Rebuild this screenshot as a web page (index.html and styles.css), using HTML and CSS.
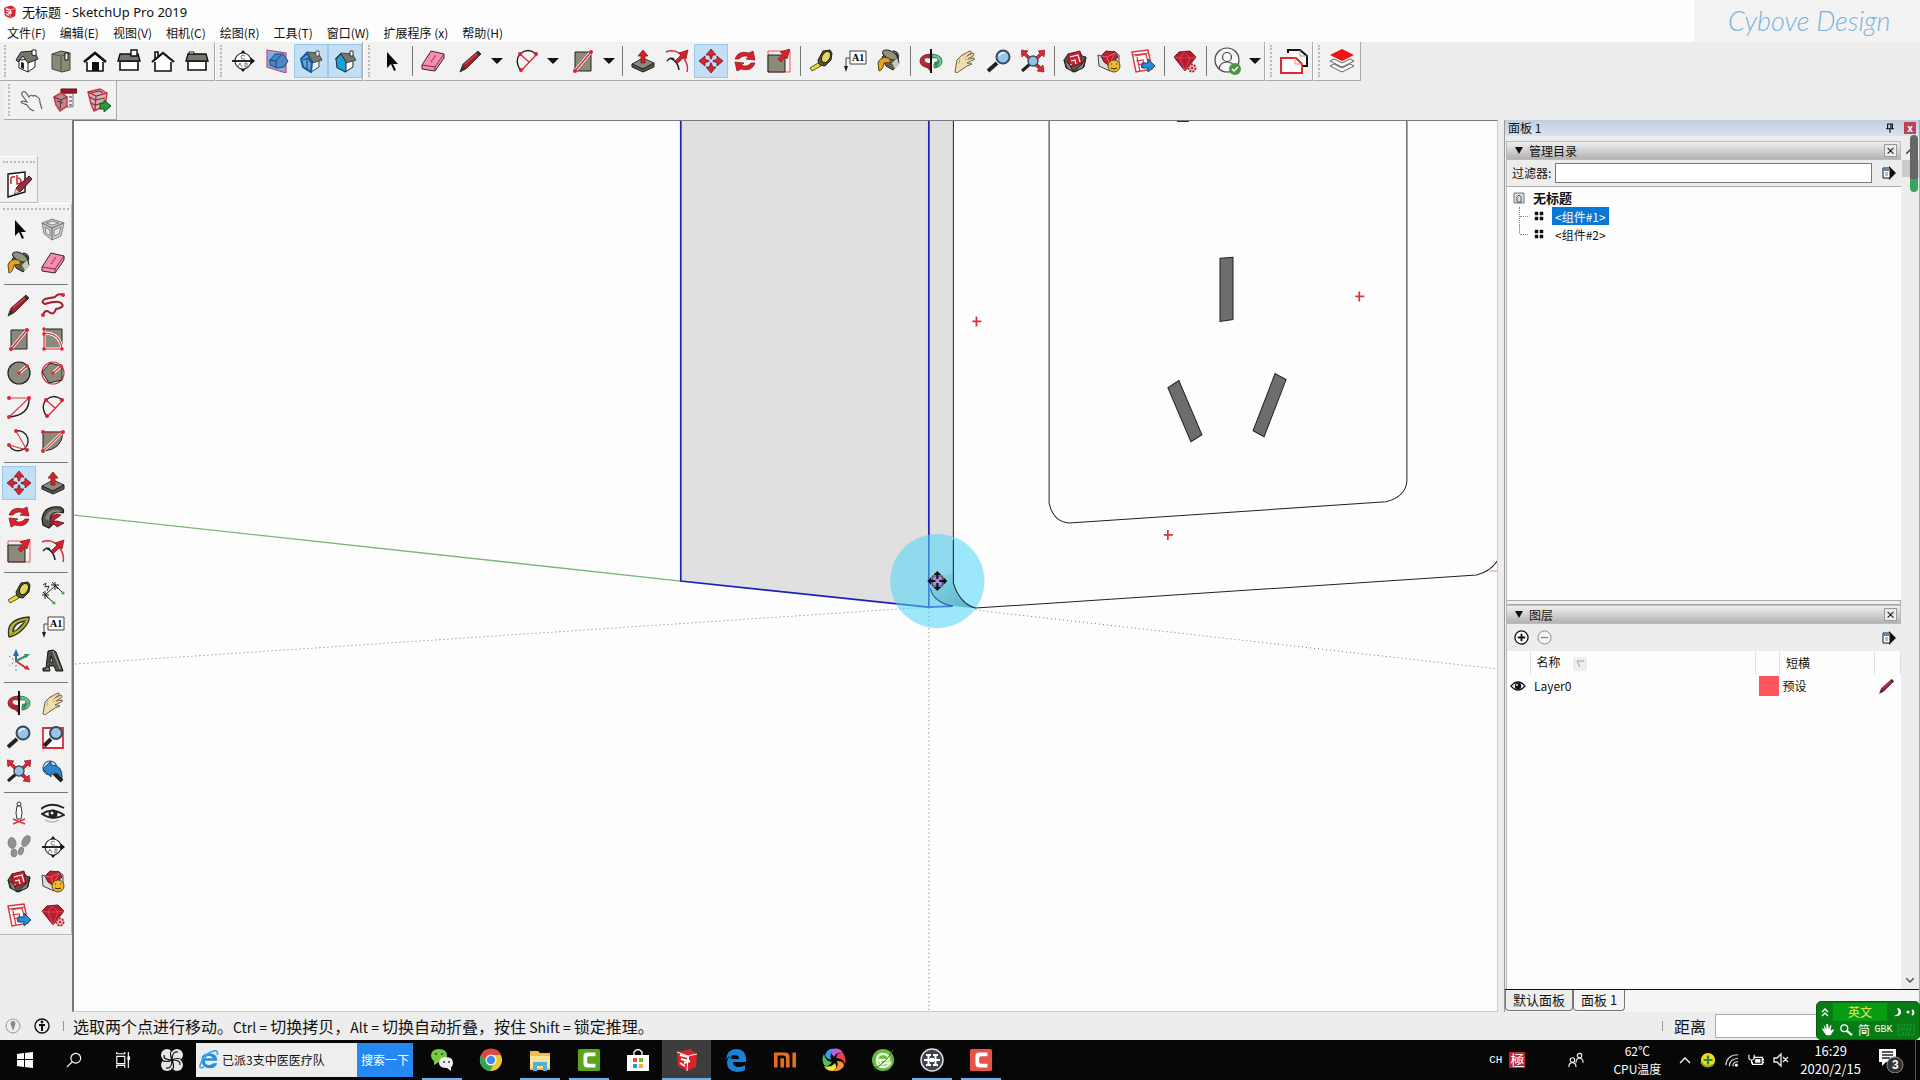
FILE: index.html
```html
<!DOCTYPE html>
<html lang="zh-CN">
<head>
<meta charset="utf-8">
<title>无标题 - SketchUp Pro 2019</title>
<link rel="stylesheet" href="styles.css">
</head>
<body>
<svg class="sprite" aria-hidden="true">
  <symbol id="i-logo" viewBox="0 0 24 24"><path d="M2 4 15 1l7 5-1 13-9 4-9-5z" fill="#d8232c"/><path d="m2 4 11 4 9-2M13 8l-1 15" fill="none" stroke="#fff" stroke-width="1"/><path d="m5 7 8 2v4l-7-2M9 15l6-2M5 15l5 3" fill="none" stroke="#fff" stroke-width="2"/></symbol>
  <symbol id="i-iso" viewBox="0 0 24 24"><path d="M4 11v8l9 4 7-5v-8z" fill="#fff" stroke="#222"/><path d="M1 11 6 3l13-1 4 8-10 4-5-7-5 6z" fill="#77776c" stroke="#222"/><path d="M6 13v6l3 1v-6z" fill="#222"/><path d="M13 14v9" stroke="#222"/><path d="M17 1h4v6l-4-1z" fill="#fff" stroke="#222"/></symbol>
  <symbol id="i-top" viewBox="0 0 24 24"><path d="m3 5 9-3 9 2v17l-8 2-10-3z" fill="#8b8a75" stroke="#444"/><path d="M12 6v17M3 5l9 2 9-3" fill="none" stroke="#55554a"/><path d="M16 4h3v7h-3z" fill="#fff" stroke="#111"/></symbol>
  <symbol id="i-front" viewBox="0 0 24 24"><path d="M4 12v10h16V12" fill="#fff" stroke="#111" stroke-width="1.6"/><path d="m1 13 11-9 11 9" fill="#fff" stroke="#111" stroke-width="2.6"/><path d="M9 13h7v9H9z" fill="#111"/></symbol>
  <symbol id="i-right" viewBox="0 0 24 24"><path d="M3 12h18v9H3z" fill="#fff" stroke="#111" stroke-width="1.6"/><path d="m3 5-2 7h22l-2-7z" fill="#77776c" stroke="#111" stroke-width="1.4"/><path d="M14 1h6v6h-6z" fill="#fff" stroke="#111" stroke-width="1.4"/></symbol>
  <symbol id="i-back" viewBox="0 0 24 24"><path d="M4 3h3v8H4zM4 12v10h16V12" fill="#fff" stroke="#111" stroke-width="1.6"/><path d="m1 13 11-9 11 9" fill="#fff" stroke="#111" stroke-width="2.2"/></symbol>
  <symbol id="i-left" viewBox="0 0 24 24"><path d="M3 12h18v9H3z" fill="#fff" stroke="#111" stroke-width="1.6"/><path d="m3 5-2 7h22l-2-7z" fill="#77776c" stroke="#111" stroke-width="1.4"/><path d="M4 3h5v2H4z" fill="#fff" stroke="#111"/></symbol>
  <symbol id="i-section" viewBox="0 0 24 24"><path d="m12 1 4 5H8zM12 23l4-5H8zM18 7l6 5-6 5z" fill="#111"/><circle cx="12" cy="12" r="8" fill="#fff" stroke="#333" stroke-width="1.2"/><path d="M1 12h22" stroke="#111" stroke-width="1.8"/><path d="M14 7q-4-2-4 1t4 2M7 18l2-4 2 4m3-4v4h2v-4h-2" fill="none" stroke="#777"/></symbol>
  <symbol id="i-plane" viewBox="0 0 24 24"><path d="m2 1 19 3v20L2 18z" fill="#82aee0" stroke="#c0487a" stroke-width="1.2"/><path d="m5 11 5-6h8l5 7-4 6-7 1-7-3z" fill="#4d85bd" stroke="#174b82"/><path d="M11 12v7M4 11l7 1 5-6" fill="none" stroke="#174b82"/></symbol>
  <symbol id="i-cut" viewBox="0 0 24 24"><path d="M4 10v8l8 5 8-5v-7z" fill="#eee" stroke="#345"/><path d="m2 10 6-7 11 1 4 7-10 3-4-7z" fill="#77776c" stroke="#444"/><path d="m2 10 6-6 5 9-1 10-8-5z" fill="#5fa5d8" stroke="#145aa0" stroke-width="2"/><path d="M4 11 9 9l3 5M8 10v10" fill="none" stroke="#124" stroke-width=".8"/><path d="M17 2h3v5h-3z" fill="#fff" stroke="#456"/></symbol>
  <symbol id="i-fill" viewBox="0 0 24 24"><path d="M4 10v8l8 5 8-5v-7z" fill="#fff" stroke="#222"/><path d="m2 10 6-6 11 1 4 6-10 3-4-7z" fill="#77776c" stroke="#444"/><path d="m3 10 5-5 5 8v10l-9-4z" fill="#169fd8" stroke="#234"/><path d="M17 2h3v5h-3z" fill="#fff" stroke="#333"/></symbol>
  <symbol id="i-cursor" viewBox="0 0 24 24"><path d="M8 3v16l4-4 3 7 2-1-3-6h5z" fill="#080808"/></symbol>
  <symbol id="i-eraser" viewBox="0 0 24 24"><path d="m1 16 9-14 13 3v4l-9 13-13-2z" fill="#f48fb0" stroke="#42212f"/><path d="m1 16 13 2 9-13M14 18v4" fill="none" stroke="#713349"/><path d="m10 13 5-7" stroke="#a93b61" stroke-width="1.6" stroke-dasharray="2 1"/></symbol>
  <symbol id="i-pencil" viewBox="0 0 24 24"><path d="m1 23 3-8L19 2l3 3L8 19z" fill="#a91c2a" stroke="#352226" stroke-width=".8"/><path d="m3 17 4 3-6 3zM17 4l2-2 3 3-2 2z" fill="#333"/><path d="M6 15 18 5" stroke="#e25a62"/></symbol>
  <symbol id="i-arc" viewBox="0 0 24 24"><path d="M6 22Q-1 12 5 5q8-7 16 0" fill="none" stroke="#222" stroke-width="1.4"/><path d="M6 22 22 5M5 5l9 8" stroke="#d82232" stroke-width="1.2"/><g fill="#d82232"><circle cx="6" cy="21" r="2"/><circle cx="21" cy="5" r="2"/><circle cx="5" cy="5" r="2"/></g></symbol>
  <symbol id="i-rect" viewBox="0 0 24 24"><path d="M4 3h16v19H4z" fill="#8b8979" stroke="#222"/><path d="M4 22 20 3" stroke="#fff" stroke-width="3"/><path d="M4 22 20 3" stroke="#d82232" stroke-width="1.4"/><circle cx="4" cy="22" r="2" fill="#d82232"/><circle cx="20" cy="3" r="2" fill="#d82232"/></symbol>
  <symbol id="i-push" viewBox="0 0 24 24"><path d="m1 15 11-6 11 5-11 6z" fill="#8c8a79" stroke="#333"/><path d="M1 15v3l11 5 11-5v-4l-11 6z" fill="#55554a" stroke="#222"/><path d="M10 14V7H7l5-6 5 6h-3v7z" fill="#da2028" stroke="#69171b" stroke-width=".7"/></symbol>
  <symbol id="i-offset" viewBox="0 0 24 24"><path d="M1 3q10-4 17 5 6 8 4 15" fill="none" stroke="#df2632" stroke-width="1.4"/><path d="M2 12q3-4 7-2M5 9q8 3 9 12" fill="none" stroke="#222" stroke-width="1.5"/><path d="m10 12 6-6-2-2 9-3-2 9-2-2-6 6z" fill="#d8202a" stroke="#701a1e" stroke-width=".7"/></symbol>
  <symbol id="i-move" viewBox="0 0 24 24"><path d="m12 0 5 6h-3.500l-1 4h-1l-1-4H7zM24 12l-6 5v-3.500l-4-1v-1l4-1V7zM12 24l-5-6h3.500l1-4h1l1 4H17zM0 12l6-5v3.500l4 1v1l-4 1V17z" fill="#dc2530" stroke="#701a20" stroke-width=".8"/></symbol>
  <symbol id="i-rotate" viewBox="0 0 24 24"><path d="M2 10Q5 1 16 4l4-2 2 9-9-1 3-2q-6-3-10 2zM22 14q-3 9-14 6l-4 2-2-9 9 1-3 2q6 3 10-2z" fill="#dd202b" stroke="#74191e" stroke-width=".7"/></symbol>
  <symbol id="i-scale" viewBox="0 0 24 24"><path d="M1 2h22v21H1z" fill="#f8eeee" stroke="#e15962"/><path d="M1 6h17v17H1z" fill="#8b8a79" stroke="#222"/><path d="m11 10 5-5-3-2 10-3-3 10-2-2-4 5z" fill="#e01f28" stroke="#721a1e" stroke-width=".7"/></symbol>
  <symbol id="i-tape" viewBox="0 0 24 24"><path d="m9 11 5-9 7-1 2 3-1 7-6 6-6-1z" fill="#50503c" stroke="#222"/><ellipse cx="17" cy="8" rx="4" ry="6" transform="rotate(30 17 8)" fill="#e5df25" stroke="#222"/><ellipse cx="17" cy="8" rx="1.500" ry="3" transform="rotate(30 17 8)" fill="#cfd0bb"/><path d="m9 14 3 3-9 5-2-3z" fill="#e5dd22" stroke="#333" stroke-width=".8"/></symbol>
  <symbol id="i-text" viewBox="0 0 24 24"><path d="M7 2h16v13H7z" fill="#fff" stroke="#444"/><path d="M7 9H3v9" fill="none" stroke="#444"/><path d="M1 17h4l-2 6z" fill="#222"/><text x="9" y="12" font-size="10" class="glyph-serif">A1</text></symbol>
  <symbol id="i-paint" viewBox="0 0 24 24"><path d="m5 8 6-6 9 3 2 9-6 7-7-4z" fill="#5f6152" stroke="#222"/><ellipse cx="13" cy="6" rx="8" ry="4" transform="rotate(25 13 6)" fill="#8f957c" stroke="#222"/><path d="M15 14q4-4 5-5l2 6-4 5z" fill="#c8cdb2"/><path d="M16 2q7 1 5 8" fill="none" stroke="#333" stroke-width="1.4"/><path d="M12 9Q3 7 1 14l1 8q4-1 5-8l7-1z" fill="#e6a420" stroke="#5a4213"/></symbol>
  <symbol id="i-orbit" viewBox="0 0 24 24"><path d="M11 5Q1 6 1 12t10 7v-4q-6-1-6-4t6-2z" fill="#c52736" stroke="#58202a" stroke-width=".8"/><path d="M13 5q10 1 10 7t-8 7v-4q4-1 4-4t-6-2z" fill="#6fbf93" stroke="#265d46" stroke-width=".8"/><path d="M12 0v24" stroke="#111" stroke-width="2"/><path d="m4 15 7-1v8z" fill="#b61d2a"/><path d="m15 13 6-1-4 7z" fill="#328b5c"/></symbol>
  <symbol id="i-hand" viewBox="0 0 24 24"><path d="m2 23 2-12 5-5 8-4q2 0 1 2l-4 3 6-3q2 1 0 3l-5 3 6-1q1 2-1 2l-6 3q4 0 5 1l-5 2-6 4-4 3z" fill="#f1deb0" stroke="#5d5138" stroke-width=".9"/><path d="m7 9-1 6M9 7l6-4m-4 6 7-4m-6 6 6-2" stroke="#ac976b" stroke-width=".7"/></symbol>
  <symbol id="i-zoom" viewBox="0 0 24 24"><path d="m1 22 9-8" stroke="#20242a" stroke-width="4"/><circle cx="16" cy="8" r="6.500" fill="#9bc3e3" stroke="#34495b" stroke-width="2"/><path d="M12 7q2-4 6-3" fill="none" stroke="#e8f5ff" stroke-width="1.5"/></symbol>
  <symbol id="i-extent" viewBox="0 0 24 24"><path d="m0 1 7 1-2 2 4 4-2 2-4-4-2 2zM24 1l-7 1 2 2-4 4 2 2 4-4 2 2zM23 23l-7-1 2-2-4-3 2-3 4 4 2-2z" fill="#dc2631" stroke="#8c2027" stroke-width=".7"/><path d="m1 22 8-7" stroke="#222" stroke-width="3"/><circle cx="12" cy="12" r="5" fill="#97c2df" stroke="#345066" stroke-width="1.4"/></symbol>
  <symbol id="i-house3d" viewBox="0 0 24 24"><path d="m5 5 12-2 2 4 4 1-2 10-9 5-9-4-2-8z" fill="#5e5148" stroke="#262220"/><path d="m5 5 12-3 2 12-13 4z" fill="#c92033" stroke="#7c1825"/><path d="m7 8 8-2 2 7M8 12l4-1 1 4M8 16v-1" fill="none" stroke="#fff" stroke-width="1.2"/><path d="m1 11 6 5 3 7-6-4zM23 9l-4 6-9 8 10-4z" fill="#8a8175" stroke="#292522"/></symbol>
  <symbol id="i-share" viewBox="0 0 24 24"><path d="m1 6 6 2 10-6 5 4v9l-9 7-11-5z" fill="#ddd" stroke="#444"/><path d="M4 7 9 2l9 1 3 5-8 9-6-4z" fill="#bd1f31" stroke="#621d24"/><path d="m4 7 6 1 8-4-4 8M10 8l3 9" fill="none" stroke="#eb7481" stroke-width=".8"/><circle cx="17" cy="17" r="6" fill="#f1b923" stroke="#5e491b"/><path d="M14 15h1m4 0h1m-6 4q3 2 6 0" stroke="#222" fill="none"/></symbol>
  <symbol id="i-send" viewBox="0 0 24 24"><path d="m1 3 16-2 4 19-16 3z" fill="#fff" stroke="#dd3440" stroke-width="1.4"/><path d="m4 7 11-2 3 12M5 12l7-1 2 7M7 16l3-1 1 4M6 8l3 14M2 6l16-2" fill="none" stroke="#dc3541" stroke-width="1.2"/><path d="M11 14h6v-4l7 7-7 6v-4h-6z" fill="#258bdc" stroke="#17476f"/></symbol>
  <symbol id="i-ruby" viewBox="0 0 24 24"><path d="m1 8 5-5 11-1 6 6-11 14z" fill="#b71c2e" stroke="#701724"/><path d="m1 8 6 1 4-6 6 6 6-1M7 9h10l-5 13z" fill="none" stroke="#ee6270" stroke-width=".6"/><circle cx="19" cy="19" r="3.500" fill="#f4c9cc" stroke="#a52a36" stroke-width="2" stroke-dasharray="2 1"/><circle cx="19" cy="19" r="1.300" fill="#a52a36"/></symbol>
  <symbol id="i-user" viewBox="0 0 28 28"><circle cx="13" cy="13" r="12" fill="#f7f7f7" stroke="#444" stroke-width="1.2"/><circle cx="13" cy="10" r="4.500" fill="none" stroke="#444" stroke-width="1.2"/><path d="M5 22q1-7 8-7t8 7" fill="none" stroke="#444" stroke-width="1.2"/><circle cx="21" cy="22" r="6" fill="#4c9642"/><path d="m18 22 2 2 4-4" fill="none" stroke="#fff" stroke-width="1.4"/></symbol>
  <symbol id="i-docs" viewBox="0 0 28 28"><path d="M8 6V3h12l7 6v10h-4" fill="#fff" stroke="#111" stroke-width="2"/><path d="M20 3v6h7" fill="none" stroke="#999"/><path d="M1 11h15l6 6v9H1z" fill="#fff" stroke="#e12630" stroke-width="2"/><path d="M15 11v6h7" fill="none" stroke="#e88"/></symbol>
  <symbol id="i-layers" viewBox="0 0 28 28"><path d="m2 19 12 6 12-6-4-2-8 4-8-4z" fill="#fff" stroke="#666"/><path d="m2 14 12 6 12-6-4-2-8 4-8-4z" fill="#fff" stroke="#666"/><path d="m14 2 12 6-12 6L2 8z" fill="#f31212"/></symbol>
  <symbol id="i-point" viewBox="0 0 24 24"><path d="M4 4q2-2 6 5 2-3 4-1 3-1 4 1 3 0 3 6l2 6M4 4q-2 1-1 3l5 7-5-1q-2 1 0 2l5 2 3 4 4 2" fill="none" stroke="#555" stroke-width="1.1"/></symbol>
  <symbol id="i-attr" viewBox="0 0 24 24"><path d="M11 5h9v14h-9z" fill="#eee" stroke="#777"/><path d="M8 1h16v4H8z" fill="#a91626" stroke="#53151b"/><path d="m1 9 7-4 6 4v9l-7 5-4-6z" fill="#b78b8b" stroke="#c83950" stroke-width="1.5"/><path d="m1 9 7 3 6-3m-6 3-1 9M4 13l6 2" fill="none" stroke="#622833"/><path d="M16 9h3m-3 4h3m-3 4h3" stroke="#333"/></symbol>
  <symbol id="i-option" viewBox="0 0 24 24"><path d="m1 4 12-3 7 4-2 13-11 5-3-7z" fill="#cbbab3" stroke="#cb314a" stroke-width="1.4"/><path d="m1 4 8 4 11-3M9 8 8 22M3 9l5 3 10-2M4 15l4 2 8-2M4 5l8-2 4 2" fill="none" stroke="#a8223b" stroke-width="1.2"/><path d="M13 15h4v-3l7 6-7 6v-3h-4z" fill="#299c3a" stroke="#174d22"/></symbol>
  <symbol id="i-rb" viewBox="0 0 28 28"><path d="m3 4 17-2v20L3 27z" fill="#fff" stroke="#111" stroke-width="1.4"/><path d="M6 14V8q2-2 4-1M12 5v9q4 0 4-3t-4-3" fill="none" stroke="#d52b36" stroke-width="1.6"/><path d="m9 24 3-7L24 6l3 3-11 12z" fill="#a42d3b" stroke="#222"/><path d="m9 24 2-5 3 3z" fill="#e9ca9c"/></symbol>
  <symbol id="i-component" viewBox="0 0 24 24"><path d="m1 6 10-4 12 4-3 13-9 4-8-6z" fill="#c9c9c9" stroke="#888"/><path d="m1 6 10 5 12-5M11 11v12" fill="none" stroke="#777" stroke-width="1.2"/><path d="m5 6 7-2 6 2-7 2zM4 10l5 3v6l-4-3zM13 13l7-3-2 7-5 2z" fill="#e7e7e7" stroke="#888"/></symbol>
  <symbol id="i-free" viewBox="0 0 24 24"><path d="M22 2q-5-2-8 2L4 6q-5 3 0 5 13-4 16-1 5 4-5 6-2 7-7 3-4-3-6 3" fill="none" stroke="#9d1f2e" stroke-width="2"/><circle cx="22" cy="2" r="2" fill="#da2736"/><circle cx="2" cy="22" r="2" fill="#da2736"/></symbol>
  <symbol id="i-rotrect" viewBox="0 0 24 24"><path d="M3 2h18v20H3z" fill="#8b8979" stroke="#222"/><path d="M3 2v20h18M3 6q16 0 18 16" fill="none" stroke="#fff" stroke-width="3"/><path d="M3 2v20h18M3 6q16 0 18 16" fill="none" stroke="#d82333" stroke-width="1.2"/><g fill="#d82333"><circle cx="3" cy="2" r="1.800"/><circle cx="3" cy="7" r="1.800"/><circle cx="3" cy="22" r="1.800"/><circle cx="21" cy="22" r="1.800"/></g></symbol>
  <symbol id="i-circle" viewBox="0 0 24 24"><circle cx="12" cy="12" r="11" fill="#8b8a79" stroke="#222" stroke-width="1.2"/><path d="m12 12 8-7" stroke="#fff" stroke-width="3"/><path d="m12 12 8-7" stroke="#db2737" stroke-width="1.3"/><circle cx="12" cy="12" r="1.800" fill="#db2737"/><circle cx="20" cy="5" r="1.800" fill="#db2737"/></symbol>
  <symbol id="i-polygon" viewBox="0 0 24 24"><circle cx="12" cy="12" r="11" fill="none" stroke="#dc3140" stroke-width="1.2"/><path d="m1 11 8-9 12 3v14l-13 3z" fill="#8b8a79" stroke="#222"/><path d="m12 12 8-7" stroke="#fff" stroke-width="3"/><path d="m12 12 8-7" stroke="#db2737" stroke-width="1.3"/><circle cx="12" cy="12" r="1.800" fill="#db2737"/><circle cx="20" cy="5" r="1.800" fill="#db2737"/></symbol>
  <symbol id="i-arc2" viewBox="0 0 24 24"><path d="M22 3q1 17-20 19" fill="none" stroke="#222" stroke-width="1.4"/><path d="M2 3h20L2 22" fill="none" stroke="#dd3541" stroke-width="1.1"/><g fill="#db2737"><circle cx="2" cy="3" r="2"/><circle cx="22" cy="3" r="2"/><circle cx="2" cy="22" r="2"/></g></symbol>
  <symbol id="i-arc3" viewBox="0 0 24 24"><path d="M9 2a10 10 0 1 1-7 14" fill="none" stroke="#222" stroke-width="1.4"/><path d="m9 2 11 19L2 16" fill="none" stroke="#dd3541" stroke-width="1.1"/><g fill="#db2737"><circle cx="9" cy="2" r="2"/><circle cx="20" cy="21" r="2"/><circle cx="2" cy="16" r="2"/></g></symbol>
  <symbol id="i-pie" viewBox="0 0 24 24"><path d="M2 3h20q-1 18-20 19z" fill="#8b8a79" stroke="#222"/><path d="M2 22 22 3" fill="none" stroke="#fff" stroke-width="3"/><path d="M2 3h20L2 22" fill="none" stroke="#dd3541" stroke-width="1.1"/><g fill="#db2737"><circle cx="2" cy="3" r="2"/><circle cx="22" cy="3" r="2"/><circle cx="2" cy="22" r="2"/></g></symbol>
  <symbol id="i-follow" viewBox="0 0 24 24"><path d="M1 14Q3 0 19 2q5 2 3 6-9-3-12 3l2 8-4 4-6-3z" fill="#56544c" stroke="#161616" stroke-width="1.2"/><path d="M4 13Q8 3 18 5l2 2Q8 5 8 16z" fill="#8c887b"/><path d="M10 12q4-5 10-2l-7 5 1 4-5 1z" fill="#b32533" stroke="#5b151d" stroke-width=".8"/><path d="m11 17 5-1 7 2-7 4z" fill="#c9232f" stroke="#461218" stroke-width=".8"/></symbol>
  <symbol id="i-dimension" viewBox="0 0 24 24"><path d="m4 14 10-9M4 14l9 8M14 4l8 8M1 14h7M4 10v8M10 4h8M14 1v8M2 11l5 6M11 1l6 7" stroke="#222" stroke-width="1"/><path d="m2 4 3-2-1 4 4-1-2 5" fill="none" stroke="#333"/><circle cx="13" cy="22" r="1.600" fill="#46a951"/><circle cx="22" cy="12" r="1.600" fill="#46a951"/></symbol>
  <symbol id="i-protractor" viewBox="0 0 24 24"><path fill-rule="evenodd" d="M2 22Q-2 4 22 2q1 5-6 12T2 22m4-5q8-4 12-11Q6 8 6 17" fill="#b3b240" stroke="#32321a" stroke-width="1.3"/><path d="M4 20 20 4" stroke="#77751f" stroke-width="1"/></symbol>
  <symbol id="i-axes" viewBox="0 0 24 24"><path d="M9 12V5" stroke="#276dac" stroke-width="2"/><path d="m9 12 10-5" stroke="#369454" stroke-width="2"/><path d="m9 12 10 7" stroke="#cf2c35" stroke-width="2"/><path d="M9 0 6 7h6z" fill="#276dac"/><path d="m23 5-6 0 2 4z" fill="#369454"/><path d="m23 21-6-1 3-4z" fill="#cf2c35"/><path d="m2 7 7 5-7 5M9 12v10" fill="none" stroke="#6a8ba4" stroke-dasharray="2 2"/></symbol>
  <symbol id="i-3d" viewBox="0 0 24 24"><path fill-rule="evenodd" d="M2 19h3L7 2l5-1 3 2 6 16 1 3h-7l-2-5H8l1 5H2zm7-6h3l-2-6z" fill="#4f504a" stroke="#161616"/><path d="m12 2 7 18M5 20h3" stroke="#aaa"/></symbol>
  <symbol id="i-zoomwin" viewBox="0 0 24 24"><path d="M2 3h20v20H2z" fill="#fff" stroke="#df2d38" stroke-width="1.8"/><path d="m3 21 7-7" stroke="#20242a" stroke-width="4"/><circle cx="15" cy="8" r="6" fill="#9bc3e3" stroke="#34495b" stroke-width="2"/></symbol>
  <symbol id="i-prev" viewBox="0 0 24 24"><path d="m13 14 8 8" stroke="#222" stroke-width="4"/><circle cx="9" cy="9" r="7" fill="#d3e6f4" stroke="#456" stroke-width="1.2"/><path d="m2 10 8-8v4q12 0 11 13-3-6-11-5v4z" fill="#2f87cf" stroke="#174a73"/></symbol>
  <symbol id="i-position" viewBox="0 0 24 24"><circle cx="12" cy="3" r="2" fill="#fff" stroke="#333"/><path d="M10 5h4l1 7-1 6h-4l-1-6z" fill="#fff" stroke="#333"/><path d="m6 23 12-5M6 18l12 5" stroke="#df3440" stroke-width="1.4"/></symbol>
  <symbol id="i-look" viewBox="0 0 24 24"><path d="M0 8q10-8 23-1" fill="none" stroke="#222" stroke-width="1.8"/><path d="M1 13q10-7 22 1-11 6-22-1z" fill="#fff" stroke="#222" stroke-width="1.8"/><circle cx="12" cy="13" r="4.500" fill="#222"/><circle cx="11" cy="12" r="1.500" fill="#eee"/><path d="M4 19q7 4 14 0" fill="none" stroke="#bbb" stroke-width="1.5"/></symbol>
  <symbol id="i-walk" viewBox="0 0 24 24"><g fill="#929292" stroke="#777" stroke-width=".7"><ellipse cx="5" cy="8" rx="4" ry="5.500" transform="rotate(-8 5 8)"/><ellipse cx="7" cy="18" rx="3" ry="4"/><ellipse cx="19" cy="6" rx="3.500" ry="6" transform="rotate(30 19 6)"/><ellipse cx="14" cy="16" rx="2.500" ry="4" transform="rotate(20 14 16)"/></g></symbol>
  <symbol id="i-menuarrow" viewBox="0 0 16 16"><path d="m8 1 7 7-7 7z" fill="#111"/><path d="M2 3h7v10H2z" fill="#fff" stroke="#111"/><path d="M3 4h5v2H3z" fill="#3f89ce"/><path d="M4 8h3m-3 2h3" stroke="#777"/></symbol>
  <symbol id="i-grid" viewBox="0 0 10 10"><path d="M1 1h3v3H1zM6 1h3v3H6zM1 6h3v3H1zM6 6h3v3H6z" fill="#111" stroke="#111" stroke-width=".5"/></symbol>
  <symbol id="i-eye" viewBox="0 0 16 12"><path d="M1 6q7-8 14 0-7 8-14 0z" fill="#fff" stroke="#111" stroke-width="1.3"/><circle cx="8" cy="6" r="3.200" fill="#111"/><circle cx="7" cy="5" r="1" fill="#fff"/></symbol>
  <symbol id="t-win" viewBox="0 0 16 16"><path d="m0 2 7-1v6H0zM8 1l8-1v7H8zM0 8h7v7l-7-1zM8 8h8v8l-8-1z" fill="#fff"/></symbol>
  <symbol id="t-search" viewBox="0 0 18 18"><circle cx="11" cy="7" r="5.500" fill="none" stroke="#fff" stroke-width="1.3"/><path d="m7 11-6 6" stroke="#fff" stroke-width="1.3"/></symbol>
  <symbol id="t-view" viewBox="0 0 18 18"><path d="M2 5h9v8H2zM2 0v2h9V0M2 18v-3h9v3M15 0v18" fill="none" stroke="#fff" stroke-width="1.3"/><path d="M14 5h3v4h-3z" fill="#fff"/></symbol>
  <symbol id="t-clover" viewBox="0 0 24 24"><g fill="#e6e6e6"><circle cx="7" cy="7" r="6"/><circle cx="17" cy="7" r="6"/><circle cx="7" cy="17" r="6"/><circle cx="17" cy="17" r="6"/></g><path d="M12 12Q3 12 4 7M12 12q0-9 6-8M12 12q9 0 8 5M12 12q0 9-6 8M12 1q-3 5 0 11M23 12q-6-3-11 0M12 23q3-5 0-11M1 12q6 3 11 0" fill="none" stroke="#111" stroke-width="1.2"/></symbol>
  <symbol id="t-e" viewBox="0 0 24 24"><path d="M22 14H9q0 5 6 5 4 0 6-2v5q-3 2-8 2-10-1-10-9 0-5 5-8-1 2-1 4h8q0-4-4-4Q5 7 2 12 3 1 12 1q9 0 10 9z" fill="currentColor"/></symbol>
  <symbol id="t-ie" viewBox="0 0 24 24"><path d="M7 13h15q0-9-10-9T3 13q1 9 10 9 7 0 9-6h-5q-2 2-5 2-5 0-5-5zm0-3q2-3 5-3t5 3z" fill="#238fe1"/><path d="M6 20q-7 4-4-4Q8 3 18 1q5-1 4 5" fill="none" stroke="#42a7e9" stroke-width="2"/></symbol>
  <symbol id="t-wechat" viewBox="0 0 24 24"><path d="M1 8q0-7 8-7t8 7q0 6-8 6l-5 3v-4Q1 11 1 8z" fill="#74c947"/><path d="M9 15q0-6 7-6t7 6q0 3-2 4v4l-4-3q-8 0-8-5z" fill="#eee"/><g fill="#333"><circle cx="6" cy="6" r="1"/><circle cx="12" cy="6" r="1"/><circle cx="14" cy="14" r="1"/><circle cx="19" cy="14" r="1"/></g></symbol>
  <symbol id="t-chrome" viewBox="0 0 24 24"><circle cx="12" cy="12" r="11" fill="#f2c631"/><path d="M2 7A11 11 0 0 1 22 7H12L8 14z" fill="#dd4a3d"/><path d="M2 7a11 11 0 0 0 9 16l5-9H8z" fill="#35a457"/><circle cx="12" cy="12" r="5.500" fill="#fff"/><circle cx="12" cy="12" r="4.300" fill="#438be5"/></symbol>
  <symbol id="t-folder" viewBox="0 0 24 24"><path d="M2 3h8l2 2h10v17H2z" fill="#efbd4c"/><path d="M2 8h20v12H2z" fill="#fbe38f"/><path d="M5 23v-9h14v9h-4v-5H9v5z" fill="#4daee2"/></symbol>
  <symbol id="t-c" viewBox="0 0 26 26"><rect x="1" y="1" width="24" height="24" rx="2" fill="currentColor"/><path d="M20 5H11Q7 5 7 9v8q0 4 4 4h9v-4h-7q-2 0-2-2v-4q0-2 2-2h7z" fill="#fff"/></symbol>
  <symbol id="t-store" viewBox="0 0 24 24"><path d="M1 7h22v16H1z" fill="#fff"/><path d="M8 8V4q4-5 8 0v4" fill="none" stroke="#fff" stroke-width="1.3"/><path d="M7 10h4v4H7z" fill="#e44e2d"/><path d="M13 10h4v4h-4z" fill="#7bb534"/><path d="M7 16h4v4H7z" fill="#2795da"/><path d="M13 16h4v4h-4z" fill="#edb323"/></symbol>
  <symbol id="t-mi" viewBox="0 0 26 18"><path d="M1 1h12q5 0 5 5v11h-4V7q0-3-3-3H5v13H1zM8 7h4v10H8zM21 1h4v16h-4z" fill="#e56c25"/></symbol>
  <symbol id="t-color" viewBox="0 0 24 24"><path d="M12 9Q7 4 10 1q8-2 11 4-6-2-9 4z" fill="#c95be0"/><path d="M14 10q2-7 7-5 4 6 2 11-2-6-9-6z" fill="#ee4141"/><path d="M15 13q7 0 7 5-4 6-10 5 5-5 3-10z" fill="#f6932e"/><path d="M13 15q3 6-2 8-7 0-9-5 7 2 11-3z" fill="#f0e22e"/><path d="M10 14q-4 6-8 3-3-6 0-11 1 7 8 8z" fill="#4dc262"/><path d="M9 12Q1 9 4 5q3-5 8-4-5 5-3 11z" fill="#399ee8"/></symbol>
  <symbol id="t-360" viewBox="0 0 24 24"><circle cx="12" cy="12" r="11" fill="#65bd3e"/><path d="M6 12h12q0-6-6-6t-6 6q0 7 6 7 5 0 7-4h-5q-4 3-5-2" fill="none" stroke="#edf9df" stroke-width="2.4"/><path d="M3 21Q16 14 22 2" fill="none" stroke="#2b7e21" stroke-width="1"/></symbol>
  <symbol id="t-x" viewBox="0 0 24 24"><circle cx="12" cy="12" r="11" fill="#40444f" stroke="#ddd" stroke-width="1.5"/><path d="M6 6h5v2H9.500v8H11v2H6v-2h1.500V8H6zM13 6h5v2h-1.500v8H18v2h-5v-2h1.500V8H13zM10 10h4v4h-4zM4 11h16v2H4z" fill="#fff"/></symbol>
  <symbol id="t-people" viewBox="0 0 18 18"><g fill="none" stroke="#eee" stroke-width="1.3"><circle cx="5" cy="9" r="2.500"/><path d="M1 17q0-5 4-5t4 5"/><circle cx="13" cy="4" r="2.500"/><path d="M9 12q0-5 4-5t4 5"/></g></symbol>
  <symbol id="t-plus" viewBox="0 0 18 18"><circle cx="9" cy="9" r="8" fill="#efdc1e"/><path d="M1 11q5 9 14 3" fill="none" stroke="#83a81d" stroke-width="2"/><path d="M9 4v10M4 9h10" stroke="#278638" stroke-width="2.5"/></symbol>
  <symbol id="t-wifi" viewBox="0 0 16 16"><g fill="none" stroke="#ddd" stroke-width="1.4"><path d="M1 14Q2 2 15 2M5 15q0-8 10-9M9 15q0-5 6-5"/></g><circle cx="13" cy="14" r="1.700" fill="#fff"/></symbol>
  <symbol id="t-battery" viewBox="0 0 18 14"><path d="M6 4h10v8H5V9M16 6h2v4h-2M1 1v3q0 3 3 3t3-3V1M4 7v4" fill="none" stroke="#fff" stroke-width="1.3"/><path d="M8 6h6v4H8z" fill="#fff"/></symbol>
  <symbol id="t-sound" viewBox="0 0 16 14"><path d="M1 5h3l4-4v12L4 9H1zM10 4l5 5m0-5-5 5" fill="none" stroke="#eee" stroke-width="1.3"/></symbol>
  <symbol id="t-note" viewBox="0 0 26 26"><path d="M1 2h17v13H8l-4 4v-4H1z" fill="#fff"/><path d="M4 5h11M4 8h11M4 11h8" stroke="#222" stroke-width="1.4"/><circle cx="17" cy="18" r="8" fill="#333" stroke="#888"/><text x="14" y="22" font-size="12" font-weight="700" fill="#fff" class="glyph">3</text></symbol>
</svg>

<div class="app">
<header class="titlebar">
  <div class="caption">
    <svg class="s14"><use href="#i-logo"/></svg><h1>无标题 - SketchUp Pro 2019</h1>
  </div>
  <nav class="menu">
    <button>文件(F)</button><button>编辑(E)</button><button>视图(V)</button><button>相机(C)</button><button>绘图(R)</button><button>工具(T)</button><button>窗口(W)</button><button>扩展程序 (x)</button><button>帮助(H)</button>
  </nav>
  <div class="brand">Cybove Design</div>
</header>

<div class="toolbar">
  <div class="group">
    <button class="tool" aria-label="等轴视图"><svg><use href="#i-iso"/></svg></button>
    <button class="tool" aria-label="俯视图"><svg><use href="#i-top"/></svg></button>
    <button class="tool" aria-label="前视图"><svg><use href="#i-front"/></svg></button>
    <button class="tool" aria-label="右视图"><svg><use href="#i-right"/></svg></button>
    <button class="tool" aria-label="后视图"><svg><use href="#i-back"/></svg></button>
    <button class="tool" aria-label="左视图"><svg><use href="#i-left"/></svg></button>
  </div>
  <div class="group">
    <button class="tool" aria-label="剖切面"><svg><use href="#i-section"/></svg></button>
    <button class="tool" aria-label="显示剖切面"><svg><use href="#i-plane"/></svg></button>
    <button class="tool on" aria-label="显示剖面切割"><svg><use href="#i-cut"/></svg></button>
    <button class="tool on" aria-label="显示剖面填充"><svg><use href="#i-fill"/></svg></button>
  </div>
  <div class="group">
    <button class="tool" aria-label="选择"><svg><use href="#i-cursor"/></svg></button>
    <span class="rule"></span>
    <button class="tool" aria-label="擦除"><svg><use href="#i-eraser"/></svg></button>
    <span class="split"><button class="tool" aria-label="直线"><svg><use href="#i-pencil"/></svg></button><button class="drop" aria-label="更多直线"></button></span>
    <span class="split"><button class="tool" aria-label="圆弧"><svg><use href="#i-arc"/></svg></button><button class="drop" aria-label="更多圆弧"></button></span>
    <span class="split"><button class="tool" aria-label="矩形"><svg><use href="#i-rect"/></svg></button><button class="drop" aria-label="更多形状"></button></span>
    <span class="rule"></span>
    <button class="tool" aria-label="推拉"><svg><use href="#i-push"/></svg></button>
    <button class="tool" aria-label="偏移"><svg><use href="#i-offset"/></svg></button>
    <button class="tool on" aria-label="移动"><svg><use href="#i-move"/></svg></button>
    <button class="tool" aria-label="旋转"><svg><use href="#i-rotate"/></svg></button>
    <button class="tool" aria-label="缩放"><svg><use href="#i-scale"/></svg></button>
    <span class="rule"></span>
    <button class="tool" aria-label="卷尺"><svg><use href="#i-tape"/></svg></button>
    <button class="tool" aria-label="文字"><svg><use href="#i-text"/></svg></button>
    <button class="tool" aria-label="材质"><svg><use href="#i-paint"/></svg></button>
    <span class="rule"></span>
    <button class="tool" aria-label="环绕观察"><svg><use href="#i-orbit"/></svg></button>
    <button class="tool" aria-label="平移"><svg><use href="#i-hand"/></svg></button>
    <button class="tool" aria-label="视图缩放"><svg><use href="#i-zoom"/></svg></button>
    <button class="tool" aria-label="充满视窗"><svg><use href="#i-extent"/></svg></button>
    <span class="rule"></span>
    <button class="tool" aria-label="模型库"><svg><use href="#i-house3d"/></svg></button>
    <button class="tool" aria-label="分享模型"><svg><use href="#i-share"/></svg></button>
    <button class="tool" aria-label="发送到 LayOut"><svg><use href="#i-send"/></svg></button>
    <span class="rule"></span>
    <button class="tool" aria-label="扩展程序管理器"><svg><use href="#i-ruby"/></svg></button>
    <span class="rule"></span>
    <button class="tool big" aria-label="账户"><svg><use href="#i-user"/></svg></button><button class="drop" aria-label="账户菜单"></button>
  </div>
  <div class="group"><button class="tool big" aria-label="文档"><svg><use href="#i-docs"/></svg></button></div>
  <div class="group"><button class="tool big" aria-label="叠层"><svg><use href="#i-layers"/></svg></button></div>
</div>
<div class="toolbar second">
  <div class="group">
    <button class="tool" aria-label="与动态组件互动"><svg><use href="#i-point"/></svg></button>
    <button class="tool" aria-label="组件选项"><svg><use href="#i-attr"/></svg></button>
    <button class="tool" aria-label="组件属性"><svg><use href="#i-option"/></svg></button>
  </div>
</div>

<main class="work">
  <aside class="side">
    <div class="dock ruby"><button class="tool big" aria-label="Ruby 编辑器"><svg><use href="#i-rb"/></svg></button></div>
    <div class="dock pair">
      <button class="tool" aria-label="选择"><svg><use href="#i-cursor"/></svg></button><button class="tool" aria-label="制作组件"><svg><use href="#i-component"/></svg></button>
      <button class="tool" aria-label="材质"><svg><use href="#i-paint"/></svg></button><button class="tool" aria-label="擦除"><svg><use href="#i-eraser"/></svg></button>
      <span class="line"></span>
      <button class="tool" aria-label="直线"><svg><use href="#i-pencil"/></svg></button><button class="tool" aria-label="手绘线"><svg><use href="#i-free"/></svg></button>
      <button class="tool" aria-label="矩形"><svg><use href="#i-rect"/></svg></button><button class="tool" aria-label="旋转矩形"><svg><use href="#i-rotrect"/></svg></button>
      <button class="tool" aria-label="圆"><svg><use href="#i-circle"/></svg></button><button class="tool" aria-label="多边形"><svg><use href="#i-polygon"/></svg></button>
      <button class="tool" aria-label="圆弧"><svg><use href="#i-arc2"/></svg></button><button class="tool" aria-label="两点圆弧"><svg><use href="#i-arc"/></svg></button>
      <button class="tool" aria-label="三点圆弧"><svg><use href="#i-arc3"/></svg></button><button class="tool" aria-label="扇形"><svg><use href="#i-pie"/></svg></button>
      <span class="line"></span>
      <button class="tool on" aria-label="移动"><svg><use href="#i-move"/></svg></button><button class="tool" aria-label="推拉"><svg><use href="#i-push"/></svg></button>
      <button class="tool" aria-label="旋转"><svg><use href="#i-rotate"/></svg></button><button class="tool" aria-label="路径跟随"><svg><use href="#i-follow"/></svg></button>
      <button class="tool" aria-label="缩放"><svg><use href="#i-scale"/></svg></button><button class="tool" aria-label="偏移"><svg><use href="#i-offset"/></svg></button>
      <span class="line"></span>
      <button class="tool" aria-label="卷尺"><svg><use href="#i-tape"/></svg></button><button class="tool" aria-label="尺寸"><svg><use href="#i-dimension"/></svg></button>
      <button class="tool" aria-label="量角器"><svg><use href="#i-protractor"/></svg></button><button class="tool" aria-label="文字"><svg><use href="#i-text"/></svg></button>
      <button class="tool" aria-label="轴"><svg><use href="#i-axes"/></svg></button><button class="tool" aria-label="三维文字"><svg><use href="#i-3d"/></svg></button>
      <span class="line"></span>
      <button class="tool" aria-label="环绕观察"><svg><use href="#i-orbit"/></svg></button><button class="tool" aria-label="平移"><svg><use href="#i-hand"/></svg></button>
      <button class="tool" aria-label="视图缩放"><svg><use href="#i-zoom"/></svg></button><button class="tool" aria-label="缩放窗口"><svg><use href="#i-zoomwin"/></svg></button>
      <button class="tool" aria-label="充满视窗"><svg><use href="#i-extent"/></svg></button><button class="tool" aria-label="上一个"><svg><use href="#i-prev"/></svg></button>
      <span class="line"></span>
      <button class="tool" aria-label="定位相机"><svg><use href="#i-position"/></svg></button><button class="tool" aria-label="绕轴旋转"><svg><use href="#i-look"/></svg></button>
      <button class="tool" aria-label="漫游"><svg><use href="#i-walk"/></svg></button><button class="tool" aria-label="剖切面"><svg><use href="#i-section"/></svg></button>
      <button class="tool" aria-label="模型库"><svg><use href="#i-house3d"/></svg></button><button class="tool" aria-label="分享模型"><svg><use href="#i-share"/></svg></button>
      <button class="tool" aria-label="发送到 LayOut"><svg><use href="#i-send"/></svg></button><button class="tool" aria-label="扩展程序管理器"><svg><use href="#i-ruby"/></svg></button>
    </div>
  </aside>

  <section class="canvas" aria-label="模型">
    <svg viewBox="74 122 1423 888" preserveAspectRatio="xMidYMid slice">
      <defs><linearGradient id="bend" x1="0" y1="0" x2="1" y2="1"><stop offset="0" stop-color="#cfd8d8"/><stop offset="1" stop-color="#6b8c90"/></linearGradient></defs>
      <path d="M681 120h272v463l-23 5q3 14 22 18l-24 1-247-26z" fill="#e0e0e0"/>
      <path d="M930 588q3 14 22 18l21 2q-17-8-20-25v-10l-23 5z" fill="url(#bend)"/>
      <path d="m73 515 608 66" stroke="#79b57d" stroke-width="1.300"/>
      <path d="m73 664 855-57M975 610l523 59M928.500 608v403" stroke="#777" stroke-dasharray="1 3" fill="none"/>
      <path d="M953 120v463q6 20 22 25l500-33q16-4 23-18" fill="none" stroke="#222"/>
      <path d="M1488 571h10" stroke="#d88"/>
      <path d="M1048.500 120v383q4 19 20 20l316-21q20-5 21-21V120" fill="none" stroke="#222"/>
      <path d="M1176 122h12" stroke="#333" stroke-width="2"/>
      <path d="m1219 259 13-1v62l-13 2zM1167 388l11-7 23 54-11 7zM1274 374l11 6-22 57-11-6z" fill="#6d6d6d" stroke="#222"/>
      <path d="M976 317v10m-4-5h9M1358 292v10m-4-5h9M1167 530v10m-4-5h9" stroke="#d8303a" stroke-width="1.700"/>
      <path d="M681 120v461l247 26M928.500 120v487l24-1" fill="none" stroke="#2020b8" stroke-width="1.700"/>
      <circle cx="937" cy="581" r="47" fill="#4fd6f8" opacity=".55"/>
      <path d="M930 588q3 14 22 18" fill="none" stroke="#1d5f80"/>
      <path d="M953 540v43q6 20 22 25" fill="none" stroke="#234"/>
      <path d="M932 576h10v10h-10z" fill="#9b93cf" stroke="#536"/>
      <path d="m937 571 4 4h-3v4h-2v-4h-3zM937 591l-4-4h3v-4h2v4h3zM927 581l4-4v3h4v2h-4v3zM947 581l-4-4v3h-4v2h4v3z" fill="#111"/>
    </svg>
  </section>

  <aside class="tray">
    <div class="tray-title"><span>面板 1</span><button class="pin" aria-label="固定"><svg viewBox="0 0 10 12"><path d="M2 7V1h6v6M6 1v6M0 7h10M5 7v5" fill="none" stroke="#111" stroke-width="1.400"/></svg></button><button class="close" aria-label="关闭">x</button></div>
    <div class="tray-body">
      <div class="panels">
        <section class="outliner">
          <h2><span class="tri"></span>管理目录<button aria-label="关闭管理目录">×</button></h2>
          <div class="filter"><label for="filter">过滤器:</label><input id="filter" type="text"><button class="detail" aria-label="详细信息"><svg><use href="#i-menuarrow"/></svg></button></div>
          <div class="tree">
            <div class="root"><svg viewBox="0 0 12 12"><path d="M1 1h10v10H1z" fill="#ddd" stroke="#777"/><path d="m3 6 3-3 3 3M4 6v4h4V6" fill="none" stroke="#555"/></svg><b>无标题</b></div>
            <ul>
              <li><svg><use href="#i-grid"/></svg><button class="picked">&lt;组件#1&gt;</button></li>
              <li><svg><use href="#i-grid"/></svg><button>&lt;组件#2&gt;</button></li>
            </ul>
          </div>
        </section>
        <div class="splitter"></div>
        <section class="layers">
          <h2><span class="tri"></span>图层<button aria-label="关闭图层">×</button></h2>
          <div class="layer-tools">
            <button aria-label="添加图层"><svg viewBox="0 0 16 16"><circle cx="8" cy="8" r="7" fill="#fff" stroke="#111" stroke-width="1.400"/><path d="M8 4v8M4 8h8" stroke="#111" stroke-width="2"/></svg></button>
            <button aria-label="删除图层"><svg viewBox="0 0 16 16"><circle cx="8" cy="8" r="7" fill="#f5f5f5" stroke="#888"/><path d="M4 8h8" stroke="#888" stroke-width="1.400"/></svg></button>
            <button class="detail" aria-label="详细信息"><svg><use href="#i-menuarrow"/></svg></button>
          </div>
          <table>
            <colgroup><col class="c-eye"><col><col class="c-swatch"><col class="c-dash"><col class="c-pen"></colgroup>
            <thead><tr><th></th><th>名称<span class="sort"><svg viewBox="0 0 8 8"><path d="M1 1h7M1 1l3 6" fill="none" stroke="#999"/></svg></span></th><th></th><th class="dash">短横</th><th></th></tr></thead>
            <tbody><tr><td><svg class="eye"><use href="#i-eye"/></svg></td><td>Layer0</td><td><span class="swatch"></span></td><td>预设</td><td><svg class="s16"><use href="#i-pencil"/></svg></td></tr></tbody>
          </table>
        </section>
      </div>
      <div class="scroll"><svg viewBox="0 0 8 5"><path d="m0 5 4-4 4 4" fill="none" stroke="#444" stroke-width="1.500"/></svg><span class="thumb"></span><svg class="down" viewBox="0 0 8 5"><path d="m0 0 4 4 4-4" fill="none" stroke="#555" stroke-width="1.500"/></svg></div>
    </div>
    <div class="tabs"><button>默认面板</button><button class="current">面板 1</button></div>
    <span class="meter"></span>
  </aside>
</main>

<footer class="status">
  <svg viewBox="0 0 16 16"><circle cx="8" cy="8" r="7" fill="none" stroke="#999"/><path d="M8 3a2.500 2.500 0 0 0-2 4l2 6 2-6a2.500 2.500 0 0 0-2-4" fill="#888"/></svg>
  <svg viewBox="0 0 16 16"><circle cx="8" cy="8" r="7" fill="none" stroke="#111" stroke-width="1.400"/><circle cx="8" cy="4" r="1.400" fill="#111"/><path d="M5 6h6v2H9v5H7V8H5z" fill="#111"/></svg>
  <span class="tick"></span>
  <p>选取两个点进行移动。<kbd>Ctrl = </kbd>切换拷贝，<kbd>Alt = </kbd>切换自动折叠，按住<kbd> Shift = </kbd>锁定推理。</p>
  <span class="tick end"></span>
  <label for="distance">距离</label><input id="distance" type="text">
</footer>

<footer class="taskbar">
  <button aria-label="开始"><svg class="s16"><use href="#t-win"/></svg></button>
  <button aria-label="搜索"><svg class="s16"><use href="#t-search"/></svg></button>
  <button aria-label="任务视图"><svg class="s16"><use href="#t-view"/></svg></button>
  <button aria-label="应用"><svg><use href="#t-clover"/></svg></button>
  <div class="find"><svg class="s20"><use href="#t-ie"/></svg><input type="text" aria-label="搜索内容" value="已派3支中医医疗队"><button>搜索一下</button></div>
  <button class="live" aria-label="微信"><svg><use href="#t-wechat"/></svg></button>
  <button aria-label="Chrome"><svg><use href="#t-chrome"/></svg></button>
  <button class="live" aria-label="文件资源管理器"><svg><use href="#t-folder"/></svg></button>
  <button class="live green" aria-label="Camtasia"><svg><use href="#t-c"/></svg></button>
  <button aria-label="应用商店"><svg><use href="#t-store"/></svg></button>
  <button class="live front" aria-label="SketchUp"><svg><use href="#i-logo"/></svg></button>
  <button class="blue" aria-label="Edge"><svg><use href="#t-e"/></svg></button>
  <button aria-label="小米"><svg><use href="#t-mi"/></svg></button>
  <button aria-label="色彩"><svg><use href="#t-color"/></svg></button>
  <button aria-label="浏览器"><svg><use href="#t-360"/></svg></button>
  <button class="live" aria-label="工具"><svg><use href="#t-x"/></svg></button>
  <button class="live red" aria-label="录像机"><svg><use href="#t-c"/></svg></button>
  <div class="systray">
    <span class="lang">CH</span><span class="seal">極</span>
    <svg class="s16 people"><use href="#t-people"/></svg>
    <span class="temp">62℃<br>CPU温度</span>
    <svg class="up" viewBox="0 0 12 7"><path d="m1 6 5-5 5 5" fill="none" stroke="#fff" stroke-width="1.300"/></svg>
    <svg class="s16"><use href="#t-plus"/></svg>
    <svg class="s14"><use href="#t-wifi"/></svg>
    <svg class="s16"><use href="#t-battery"/></svg>
    <svg class="s16"><use href="#t-sound"/></svg>
    <time>16:29<br>2020/2/15</time>
    <svg class="note"><use href="#t-note"/></svg>
    <span class="peek"></span>
  </div>
</footer>
</div>

<div class="ime">
  <div><svg class="chev" viewBox="0 0 8 10"><path d="m1 5 3-3 3 3M1 9l3-3 3 3" fill="none" stroke="#fff" stroke-width="1.400"/></svg><span class="mode">英文</span><svg viewBox="0 0 24 12"><path d="M6 2q4 6-3 8 8 1 7-5-1-3-4-3" fill="#fff"/><circle cx="17" cy="6" r="1.500" fill="#fff"/><path d="M21 4q3 2 0 5" fill="none" stroke="#fff" stroke-width="2"/></svg></div>
  <div><svg viewBox="0 0 16 14"><path d="M3 1 6 6 6 0h2l1 6 2-5 1 1-1 6 3-2 1 1-4 6H6L1 6l1-1 2 2z" fill="#fff"/></svg><svg viewBox="0 0 16 14"><circle cx="6" cy="5" r="4" fill="none" stroke="#fff" stroke-width="1.500"/><path d="m9 8 6 5" stroke="#fff" stroke-width="2.500"/></svg><span>简</span><span class="gbk">GBK</span><svg class="keys" viewBox="0 0 18 12"><path d="M1 1h16v10H1zM3 4h12M3 6h12M5 9h8" fill="none" stroke="#23a32b" stroke-dasharray="2 1"/></svg></div>
</div>
</body>
</html>
```
FILE: styles.css
```css
* { box-sizing: border-box; }
body {
  margin: 0;
  background: #ededed;
  color: #111;
  font: 12px/16px "Noto Sans CJK SC", "Noto Sans", sans-serif;
}
button, input, kbd { font: inherit; color: inherit; }
button { background: none; border: 0; padding: 0; }
h1, h2, p, ul { margin: 0; padding: 0; font-size: inherit; font-weight: 400; }
svg { display: block; flex: none; }
.sprite { display: none; }
.glyph { font-family: "Liberation Sans", sans-serif; }
.glyph-serif { font-family: "Liberation Serif", serif; font-weight: 700; }
.s14 { width: 14px; height: 14px; }
.s16 { width: 16px; height: 16px; }
.s20 { width: 20px; height: 20px; }

.app { min-height: 100vh; display: flex; flex-direction: column; }

/* Title and menu */
.titlebar {
  display: grid;
  grid-template-columns: 1fr 226px;
  grid-template-rows: 23px 19px;
  background: #fefefe;
}
.caption { display: flex; align-items: center; gap: 5px; padding-left: 3px; font-family: "Noto Sans", "Noto Sans CJK SC", sans-serif; font-size: 13px; }
.menu { display: flex; gap: 14px; padding-left: 7px; grid-row: 2; }
.menu button { line-height: 18px; }
.brand {
  grid-column: 2;
  grid-row: 1 / 3;
  background: #f3f3f3;
  color: #79b4e0;
  font: italic 300 27px/42px Lato, sans-serif;
  padding-left: 34px;
}

/* Toolbars */
.toolbar { display: flex; height: 39px; }
.group {
  position: relative;
  display: flex;
  align-items: center;
  padding-left: 10px;
  background: #f2f2f2;
  border-right: 1px solid #aaa;
  border-bottom: 1px solid #aaa;
  border-left: 1px solid #fff;
}
.group:first-child { border-left: 0; }
.group::before {
  content: "";
  position: absolute;
  left: 4px;
  top: 3px;
  bottom: 3px;
  border-left: 2px dotted #bbb;
}
.tool {
  display: flex;
  align-items: center;
  justify-content: center;
  width: 34px;
  height: 34px;
  border: 1px solid transparent;
}
.tool svg { width: 24px; height: 24px; }
.tool.big { width: 36px; }
.tool.big svg { width: 28px; height: 28px; }
.tool.on { background: #c2dff5; border-color: #98c8ec; }
.rule { width: 8px; height: 30px; background: linear-gradient(#777, #777) 50% 0 / 1px 100% no-repeat; }
.split { display: flex; padding-left: 4px; }
.drop { display: flex; width: 18px; align-items: center; justify-content: center; }
.drop::before { content: ""; border: 6px solid transparent; border-top-color: #111; border-bottom: 0; }
.second { padding-left: 4px; }

/* Work area */
.work { flex: 1; display: grid; grid-template-columns: 72px minmax(0, 1fr) 416px; }
.side { padding-top: 36px; }
.dock { position: relative; background: #f2f2f2; border: 1px solid #bbb; border-left: 0; border-top-color: #fff; }
.dock::before { content: ""; position: absolute; left: 3px; right: 2px; top: 4px; border-top: 2px dotted #bbb; }
.ruby { width: 38px; padding: 10px 0 1px 1px; }
.pair { width: 72px; padding: 8px 0 2px 2px; display: grid; grid-template-columns: 34px 34px; }
.line { grid-column: 1 / 3; height: 8px; margin: 0 2px; background: linear-gradient(#777, #777) 0 50% / 100% 1px no-repeat; }

.canvas {
  position: relative;
  margin-right: 6px;
  background: #fdfdfd;
  border: 2px solid #777;
  border-top-width: 1px;
  border-right: 1px solid #ccc;
  border-bottom: 1px solid #ccc;
  overflow: hidden;
}
.canvas svg { position: absolute; width: 100%; height: 100%; }

/* Panels */
.tray { position: relative; display: flex; flex-direction: column; border-right: 1px solid #aaa; border-left: 1px solid #999; background: #ededed; }
.tray-title { display: flex; align-items: center; height: 16px; padding: 0 3px; background: linear-gradient(#c0cddd, #dae3ee); }
.pin { margin-left: auto; }
.pin svg { width: 8px; height: 10px; }
.close { width: 12px; height: 12px; margin-left: 10px; background: #b94453; color: #fff; line-height: 10px; font-weight: 700; font-size: 10px; }
.tray-body { flex: 1; display: flex; border-bottom: 1px solid #111; padding: 5px 0 0 1px; }
.panels { flex: 1; display: flex; flex-direction: column; border-left: 1px solid #bbb; background: #fdfdfd; }
.panels h2 { display: flex; align-items: center; height: 19px; padding: 0 3px 0 8px; background: linear-gradient(#f0f0f0, #b1b1b1); border: 1px solid #bbb; border-left: 0; }
.tri { border: 4px solid transparent; border-top: 7px solid #111; border-bottom: 0; margin-right: 6px; }
.panels h2 button { margin-left: auto; width: 13px; height: 13px; border: 1px solid #999; background: #eee; line-height: 9px; font-size: 10px; font-weight: 700; }
.outliner { flex: 0 0 459px; }
.filter { display: flex; align-items: center; height: 27px; padding: 0 4px 0 5px; background: #ededed; border-bottom: 1px solid #aaa; }
.filter input { flex: 1; min-width: 0; height: 20px; margin-left: 4px; border: 1px solid #777; background: #fff; }
.detail { margin-left: 9px; }
.detail svg { width: 16px; height: 16px; }
.tree { padding: 2px 6px; line-height: 18px; }
.root { display: flex; align-items: center; gap: 8px; font-size: 13px; }
.root svg { width: 12px; height: 12px; }
.tree ul { list-style: none; padding-left: 6px; }
.tree li { display: flex; align-items: center; height: 18px; gap: 8px; border-left: 1px dotted #888; }
.tree li:last-child { border-image: linear-gradient(#aaa 50%, transparent 50%) 1; }
.tree li::before { content: ""; width: 8px; border-top: 1px dotted #888; margin-right: -2px; }
.tree li svg { width: 10px; height: 10px; }
.tree li button { height: 18px; padding: 0 3px; line-height: 17px; }
.tree .picked { background: #0878d4; color: #fff; }
.splitter { height: 5px; border: 1px solid #aaa; border-left: 0; background: #eee; }
.layer-tools { display: flex; align-items: center; height: 27px; gap: 8px; padding: 0 4px 0 7px; background: #ededed; }
.layer-tools svg { width: 15px; height: 15px; }
.layer-tools .detail { margin-left: auto; }
.layer-tools .detail svg { width: 16px; height: 16px; }
table { width: 100%; border-collapse: collapse; table-layout: fixed; }
th, td { padding: 0 0 0 3px; height: 23px; text-align: left; font-weight: 400; }
th { border-right: 1px solid #e0e0e0; padding-left: 6px; }
td:last-child { padding-left: 4px; }
td:nth-child(2) { padding-left: 4px; }
.c-eye { width: 23px; }
.c-swatch { width: 24px; }
.c-dash { width: 95px; }
.c-pen { width: 26px; }
.eye { width: 16px; height: 12px; }
.sort { display: inline-flex; width: 14px; height: 14px; margin-left: 12px; align-items: center; justify-content: center; background: #eee; vertical-align: middle; }
.sort svg { width: 8px; height: 8px; }
.swatch { display: block; width: 20px; height: 20px; background: #fd555b; }
.scroll { width: 18px; display: flex; flex-direction: column; align-items: center; padding-top: 8px; }
.scroll svg { width: 8px; height: 5px; }
.thumb { width: 17px; height: 17px; margin-top: 6px; background: #cbcbcb; }
.scroll .down { margin-top: auto; margin-bottom: 6px; }
.tabs { display: flex; height: 22px; background: #f5f5f5; }
.tabs button { height: 21px; padding: 0 7px; font-size: 13px; line-height: 18px; background: #ededed; border: 1px solid #777; border-top: 0; border-radius: 0 0 4px 4px; }
.tabs .current { background: #f5f5f5; }
.meter { position: absolute; right: 1px; top: 15px; width: 8px; height: 57px; border-radius: 4px; background: linear-gradient(#666 78%, #3ba45c 78%); }

/* Status bar */
.status { display: flex; align-items: center; height: 28px; padding-left: 5px; font-size: 16px; line-height: 24px; }
.status svg { width: 16px; height: 16px; margin-right: 13px; }
.status kbd { font-size: 14px; white-space: pre; }
.tick { width: 1px; height: 10px; margin-right: 9px; background: #999; }
.tick.end { margin-left: auto; margin-right: 11px; }
.status input { width: 205px; height: 24px; margin-left: 9px; border: 1px solid #abadb3; background: #fff; }

/* Taskbar */
.taskbar { display: flex; height: 40px; background: #070707; color: #fff; }
.taskbar > button { width: 49px; display: flex; align-items: center; justify-content: center; }
.taskbar > button svg:not([class]) { width: 24px; height: 24px; }
.taskbar .live { background: linear-gradient(#75aee0, #75aee0) 50% 100% / 40px 2px no-repeat; }
.taskbar .front { background: linear-gradient(#75aee0, #75aee0) 50% 100% / 100% 2px no-repeat #3d3d3d; }
.green { color: #59a51e; }
.red { color: #e65348; }
.blue { color: #1683d6; }
.find { display: flex; align-items: center; width: 217px; height: 34px; margin: 3px 4px 0 0; background: #eee; color: #111; padding-left: 3px; }
.find input { flex: 1; min-width: 0; border: 0; padding: 0 0 0 3px; background: none; font-size: 12px; }
.find button { width: 56px; height: 34px; background: #2588f2; color: #fff; font-size: 12px; }
.systray { display: flex; align-items: center; margin-left: auto; gap: 9px; }
.lang { font: 11px/16px "Liberation Mono", monospace; }
.seal { width: 16px; height: 16px; margin-left: -2px; background: #c7232c; font-size: 14px; line-height: 15px; text-align: center; }
.people { margin-left: 34px; }
.temp { margin-left: 20px; text-align: center; font-size: 12px; line-height: 18px; }
.up { width: 12px; height: 7px; margin-left: 9px; }
.systray time { margin-left: 2px; text-align: center; font-size: 13px; line-height: 18px; }
.note { width: 26px; height: 26px; margin-left: 8px; }
.peek { width: 5px; height: 40px; margin-left: 2px; border-left: 1px solid #555; }

/* Input method bar, floating over the status bar */
.ime { position: absolute; right: 0; top: calc(100vh - 79px); width: 104px; height: 39px; border-radius: 5px; padding: 1px 4px; background: #087b14; color: #fff; border: 1px solid #075d0d; }
.ime div { display: flex; align-items: center; justify-content: space-between; height: 18px; }
.ime svg { width: 14px; height: 12px; }
.ime div:first-child svg { width: 24px; }
.ime div:first-child .chev { width: 8px; height: 10px; }
.mode { width: 54px; height: 18px; background: #079c13; color: #e4ef64; text-align: center; line-height: 17px; }
.gbk { font: 10px/14px "Liberation Mono", monospace; }
.ime .keys { width: 18px; }
```
